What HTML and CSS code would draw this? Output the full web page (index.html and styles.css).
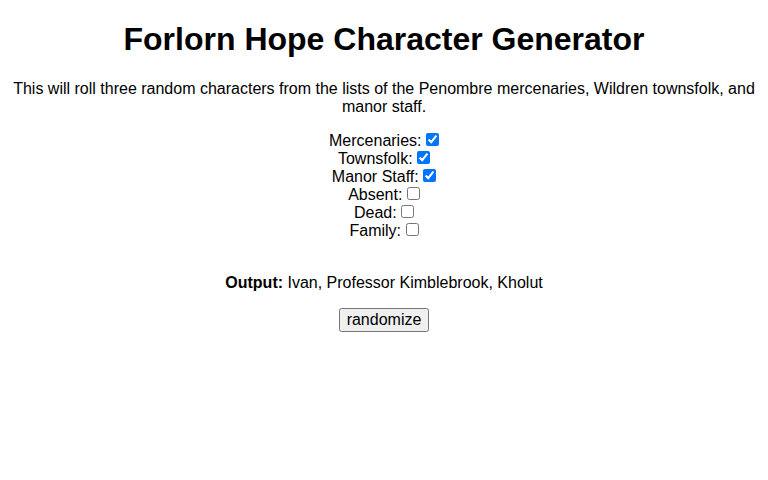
FILE: index.html
```html
<!DOCTYPE html>
<html lang="en">
<head>
    <meta charset="UTF-8">
    <title>Forlorn Hope Character Generator</title>
    <link rel="stylesheet" href="styles.css">
</head>
<body>
    <h1>Forlorn Hope Character Generator</h1>
    <p>This will roll three random characters from the lists of the Penombre mercenaries, Wildren townsfolk, and manor staff.</p>

    <div class="options">
        <label>Mercenaries: <input type="checkbox" id="mercs" checked></label><br>
        <label>Townsfolk: <input type="checkbox" id="towns" checked></label><br>
        <label>Manor Staff: <input type="checkbox" id="staff" checked></label><br>
        <label>Absent: <input type="checkbox" id="absent"></label><br>
        <label>Dead: <input type="checkbox" id="dead"></label><br>
        <label>Family: <input type="checkbox" id="family"></label><br>
    </div>
    <br>

    <p><b>Output:</b> <span id="output">Ivan, Professor Kimblebrook, Kholut</span></p>
    <button id="randomize">randomize</button>
</body>
</html>
```

FILE: styles.css
```css
body {
    font-family: "Liberation Sans", Arial, sans-serif;
    text-align: center;
    color: #000;
    background: #fff;
    margin: 0 8px;
}

h1 {
    font-size: 32px;
}

.options {
    line-height: 18px;
}

.options input {
    margin: 0;
    vertical-align: baseline;
}

button {
    font-family: "Liberation Sans", Arial, sans-serif;
    font-size: 16px;
}
```
